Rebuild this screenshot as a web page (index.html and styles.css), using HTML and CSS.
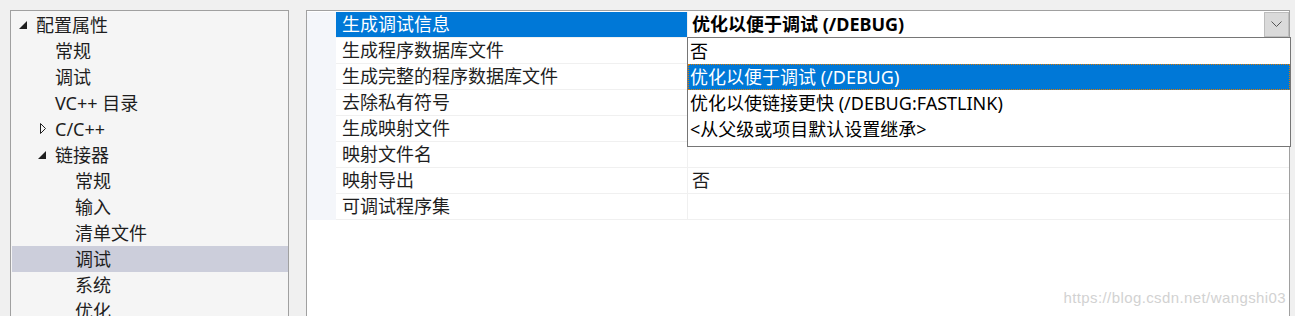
FILE: index.html
```html
<!DOCTYPE html>
<html lang="zh-CN">
<head>
    <meta charset="UTF-8">
    <title>属性页 - 链接器 - 调试</title>
    <link rel="stylesheet" href="styles.css">
</head>
<body>
    <div class="tree">
        <div class="node lvl0">
            <span class="toggle"><svg width="8" height="8" viewBox="0 0 8 8"><polygon points="0,8 8,8 8,0" fill="#1e1e1e"/></svg></span>
            <span>配置属性</span>
        </div>
        <div class="node lvl1"><span class="toggle"></span><span>常规</span></div>
        <div class="node lvl1"><span class="toggle"></span><span>调试</span></div>
        <div class="node lvl1"><span class="toggle"></span><span>VC++ 目录</span></div>
        <div class="node lvl1">
            <span class="toggle"><svg class="closed" width="6" height="11" viewBox="0 0 6 11"><polygon points="0.5,0.5 5.5,5.5 0.5,10.5" fill="none" stroke="#1e1e1e" stroke-width="1"/></svg></span>
            <span>C/C++</span>
        </div>
        <div class="node lvl1">
            <span class="toggle"><svg width="8" height="8" viewBox="0 0 8 8"><polygon points="0,8 8,8 8,0" fill="#1e1e1e"/></svg></span>
            <span>链接器</span>
        </div>
        <div class="node lvl2"><span class="toggle"></span><span>常规</span></div>
        <div class="node lvl2"><span class="toggle"></span><span>输入</span></div>
        <div class="node lvl2"><span class="toggle"></span><span>清单文件</span></div>
        <div class="node lvl2 selected"><span class="toggle"></span><span>调试</span></div>
        <div class="node lvl2"><span class="toggle"></span><span>系统</span></div>
        <div class="node lvl2"><span class="toggle"></span><span>优化</span></div>
    </div>

    <div class="props">
        <div class="grid">
            <div class="row active">
                <div class="gutter"></div>
                <div class="name">生成调试信息</div>
                <div class="value">
                    <b>优化以便于调试 (/DEBUG)</b>
                    <span class="drop-btn"><svg width="11" height="7" viewBox="0 0 11 7"><polyline points="0.5,0.5 5.5,5.5 10.5,0.5" fill="none" stroke="#555" stroke-width="1"/></svg></span>
                    <ul class="dropdown">
                        <li>否</li>
                        <li class="current">优化以便于调试 (/DEBUG)</li>
                        <li>优化以使链接更快 (/DEBUG:FASTLINK)</li>
                        <li>&lt;从父级或项目默认设置继承&gt;</li>
                    </ul>
                </div>
            </div>
            <div class="row"><div class="gutter"></div><div class="name">生成程序数据库文件</div><div class="value"></div></div>
            <div class="row"><div class="gutter"></div><div class="name">生成完整的程序数据库文件</div><div class="value"></div></div>
            <div class="row"><div class="gutter"></div><div class="name">去除私有符号</div><div class="value"></div></div>
            <div class="row"><div class="gutter"></div><div class="name">生成映射文件</div><div class="value"></div></div>
            <div class="row"><div class="gutter"></div><div class="name">映射文件名</div><div class="value"></div></div>
            <div class="row"><div class="gutter"></div><div class="name">映射导出</div><div class="value">否</div></div>
            <div class="row"><div class="gutter"></div><div class="name">可调试程序集</div><div class="value"></div></div>
        </div>
        <div class="watermark">https://blog.csdn.net/wangshi03</div>
    </div>
</body>
</html>
```

FILE: styles.css
```css
body {
    margin: 0;
    padding: 10px 0 0 10px;
    height: 316px;
    box-sizing: border-box;
    overflow: hidden;
    display: flex;
    align-items: flex-start;
    background-color: #f0f0f0;
    font-family: "Noto Sans", "Noto Sans CJK SC", sans-serif;
    font-size: 18px;
    color: #1e1e1e;
}

/* left tree */
.tree {
    width: 279px;
    height: 330px;
    box-sizing: border-box;
    padding: 1px 0 0 1px;
    border: 1px solid #a0a0a0;
    background-color: #f5f5f5;
    flex-shrink: 0;
}

.node {
    display: flex;
    align-items: center;
    height: 26px;
    line-height: 26px;
    white-space: nowrap;
}

.node.selected {
    background-color: #cccedb;
}

.lvl0 { padding-left: 7px; }
.lvl1 { padding-left: 26px; }
.lvl2 { padding-left: 46px; }

.toggle {
    display: flex;
    align-items: center;
    width: 17px;
    height: 26px;
    flex-shrink: 0;
}

.toggle svg {
    margin-top: -1px;
}

.toggle .closed {
    margin-left: 2px;
}

/* right property grid */
.props {
    position: relative;
    width: 984px;
    height: 330px;
    margin-left: 17px;
    box-sizing: border-box;
    border: 1px solid #a0a0a0;
    background-color: #fff;
    flex-shrink: 0;
}

.grid {
    padding-top: 1px;
}

.row {
    display: flex;
    height: 26px;
}

.gutter {
    width: 29px;
    background-color: #f4f6fa;
    flex-shrink: 0;
}

.name {
    width: 351px;
    box-sizing: border-box;
    padding-left: 6px;
    line-height: 25px;
    border-bottom: 1px solid #f0f0f0;
    white-space: nowrap;
    flex-shrink: 0;
}

.value {
    position: relative;
    flex: 1;
    padding-left: 4px;
    line-height: 25px;
    border-left: 1px solid #f0f0f0;
    border-bottom: 1px solid #f0f0f0;
    white-space: nowrap;
}

.row.active .name {
    background-color: #0078d7;
    color: #fff;
}

.value b {
    font-weight: 700;
    color: #000;
}

.drop-btn {
    position: absolute;
    top: 0;
    right: 0;
    width: 25px;
    height: 25px;
    box-sizing: border-box;
    border: 1px solid #bdbdbd;
    background-color: #dadada;
    display: flex;
    align-items: center;
    justify-content: center;
}

.dropdown {
    position: absolute;
    top: 25px;
    left: -1px;
    right: -2px;
    height: 110px;
    box-sizing: border-box;
    margin: 0;
    padding: 0;
    list-style: none;
    border: 1px solid #767676;
    background-color: #fff;
    z-index: 2;
}

.dropdown li {
    height: 26px;
    line-height: 26px;
    padding-left: 2px;
    color: #000;
}

.dropdown li.current {
    background-color: #0078d7;
    color: #fff;
    outline: 1px dotted #e07a00;
    outline-offset: -1px;
}

.watermark {
    position: absolute;
    top: 279px;
    right: 3px;
    font-family: "Liberation Sans", Arial, sans-serif;
    font-size: 15px;
    line-height: 15px;
    letter-spacing: 0.4px;
    color: #d2d2d2;
}
```
